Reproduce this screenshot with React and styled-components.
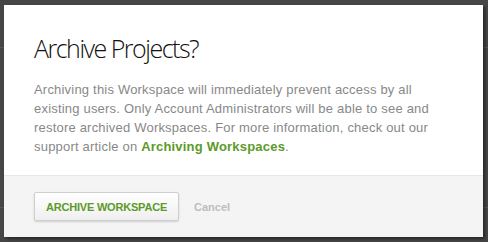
import styled, { createGlobalStyle } from "styled-components";

const GlobalStyle = createGlobalStyle`
  html, body {
    margin: 0;
    padding: 0;
    background: #464646;
  }
  body {
    width: 488px;
    height: 242px;
    overflow: hidden;
    font-family: "Liberation Sans", Arial, sans-serif;
  }
`;

// page behind the dialog, with the faint rules of the list underneath
const Backdrop = styled.div`
  width: 488px;
  height: 242px;
  background:
    linear-gradient(#565656, #565656) 0 47px / 100% 1px no-repeat,
    linear-gradient(#565656, #565656) 0 207px / 100% 1px no-repeat,
    #464646;
  display: flex;
  flex-direction: column;
  padding: 5px 5px 5px 4px;
  box-sizing: border-box;
`;

const Modal = styled.div`
  background: #fff;
  width: 479px;
  height: 232px;
  display: flex;
  flex-direction: column;
  box-shadow: 2px 2px 3px rgba(0, 0, 0, 0.45);
`;

const Body = styled.div`
  padding: 27px 30px 0 30px;
  height: 171px;
  box-sizing: border-box;
  border-bottom: 1px solid #e8e8e8;
`;

const Title = styled.h1`
  margin: 0 0 16px;
  font-family: "Open Sans", sans-serif;
  font-weight: 300;
  font-size: 25px;
  line-height: 32px;
  letter-spacing: -1.5px;
  color: #111;
`;

const Text = styled.p`
  margin: 0;
  max-width: 405px;
  font-size: 13px;
  line-height: 19px;
  letter-spacing: 0.2px;
  color: #888;
`;

const Link = styled.a`
  color: #5c9a2a;
  font-weight: bold;
  text-decoration: none;
`;

const Footer = styled.div`
  flex: 1;
  background: #f4f4f4;
  display: flex;
  align-items: center;
  gap: 15px;
  padding: 0 30px;
`;

const Button = styled.button`
  height: 29px;
  width: 145px;
  border: 1px solid #cfcfcf;
  border-radius: 2px;
  background: linear-gradient(#ffffff, #efefef);
  box-shadow: 0 1px 2px rgba(0, 0, 0, 0.15);
  font-family: "Liberation Sans", Arial, sans-serif;
  font-weight: bold;
  font-size: 11px;
  color: #5c9a2a;
  text-transform: uppercase;
  padding: 0;
  letter-spacing: -0.2px;
`;

const Cancel = styled.span`
  font-size: 11px;
  font-weight: bold;
  color: #bdbdbd;
`;

export default function App() {
  return (
    <>
      <GlobalStyle />
      <Backdrop>
        <Modal>
          <Body>
            <Title>Archive Projects?</Title>
            <Text>
              Archiving this Workspace will immediately prevent access by all
              existing users. Only Account Administrators will be able to see and
              restore archived Workspaces. For more information, check out our
              support article on <Link href="#">Archiving Workspaces</Link>.
            </Text>
          </Body>
          <Footer>
            <Button>Archive Workspace</Button>
            <Cancel>Cancel</Cancel>
          </Footer>
        </Modal>
      </Backdrop>
    </>
  );
}
